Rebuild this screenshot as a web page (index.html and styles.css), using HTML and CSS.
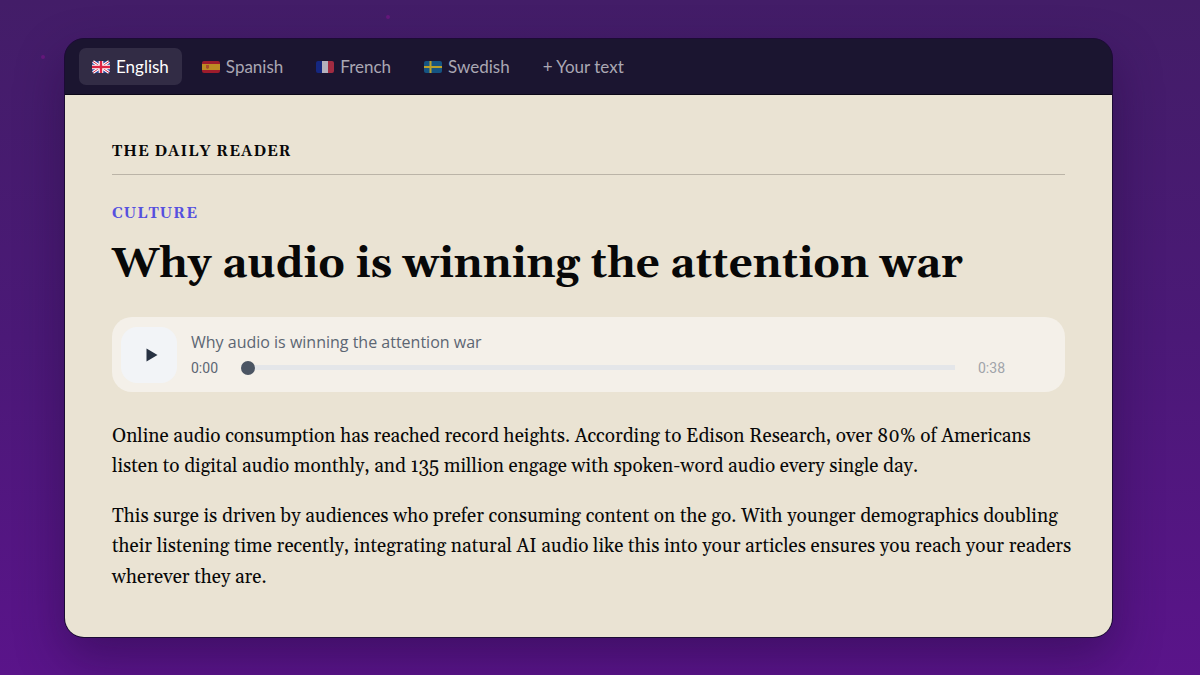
FILE: index.html
```html
<!DOCTYPE html>
<html lang="en">
<head>
<meta charset="utf-8">
<meta name="viewport" content="width=device-width, initial-scale=1">
<title>The Daily Reader</title>
<link rel="stylesheet" href="styles.css">
</head>
<body>
<span class="spark spark-top"></span>
<span class="spark spark-side"></span>
<main class="window">
  <nav class="tabs" aria-label="Language">
    <button class="tab tab-active" type="button">
      <svg class="flag" viewBox="0 0 18 14" aria-hidden="true"><rect y="1" width="18" height="12" rx="2" fill="#28469b"/><path d="M1 1.500L17 12.500M17 1.500L1 12.500" stroke="#fff" stroke-width="3"/><path d="M1 1.500L17 12.500M17 1.500L1 12.500" stroke="#d22848" stroke-width="1"/><path d="M9 1V13M0 7H18" stroke="#fff" stroke-width="4.600"/><path d="M9 1V13M0 7H18" stroke="#dc2445" stroke-width="2.400"/></svg>
      English
    </button>
    <button class="tab" type="button">
      <svg class="flag" viewBox="0 0 18 14" aria-hidden="true"><rect y="1" width="18" height="12" rx="2" fill="#9e1c2c"/><path d="M0 4H18V10H0Z" fill="#bc8b24"/><path d="M4 5H7V8L5.500 9L4 8Z" fill="#a84b2b"/></svg>
      Spanish
    </button>
    <button class="tab" type="button">
      <svg class="flag" viewBox="0 0 18 14" aria-hidden="true"><path d="M6 1H2Q0 1 0 3V11Q0 13 2 13H6Z" fill="#152780"/><path d="M6 1H12V13H6Z" fill="#b4b1bd"/><path d="M12 1H16Q18 1 18 3V11Q18 13 16 13H12Z" fill="#a22b41"/></svg>
      French
    </button>
    <button class="tab" type="button">
      <svg class="flag" viewBox="0 0 18 14" aria-hidden="true"><rect y="1" width="18" height="12" rx="2" fill="#155482"/><path d="M6.500 1V13M0 7H18" stroke="#baa02b" stroke-width="2"/></svg>
      Swedish
    </button>
    <button class="tab" type="button">+ Your text</button>
  </nav>
  <article class="article">
    <header class="masthead">THE DAILY READER</header>
    <p class="category">CULTURE</p>
    <h1 class="headline">Why audio is winning the attention war</h1>
    <section class="player" aria-label="Audio player">
      <button class="play" type="button" aria-label="Play"><svg class="play-icon" viewBox="0 0 12 14" aria-hidden="true"><path d="M0.500 0.500L11.500 7L0.500 13.500Z" fill="#273142"/></svg></button>
      <div class="track">
        <label class="track-title" for="seek">Why audio is winning the attention war</label>
        <div class="timeline">
          <span class="time">0:00</span>
          <input class="seek" id="seek" type="range" min="0" max="38" value="0">
          <span class="time time-total">0:38</span>
        </div>
      </div>
    </section>
    <p class="copy">Online audio consumption has reached record heights. According to Edison Research, over 80% of Americans listen to digital audio monthly, and 135 million engage with spoken-word audio every single day.</p>
    <p class="copy">This surge is driven by audiences who prefer consuming content on the go. With younger demographics doubling their listening time recently, integrating natural AI audio like this into your articles ensures you reach your readers wherever they are.</p>
  </article>
</main>
</body>
</html>
```
FILE: styles.css
```css
* { box-sizing: border-box; }
body {
  min-height: 100vh;
  margin: 0;
  padding: 38px 87px 37px 64px;
  display: flex;
  background: linear-gradient(#431d68, #4b1977 50%, #5a148a);
  font-family: Georgia, Gelasio, "Liberation Serif", serif;
  color: #080808;
}
.spark {
  position: absolute;
  width: 4px;
  height: 4px;
  border-radius: 50%;
  background: #64177a;
}
.spark-top { left: 386px; top: 15px; }
.spark-side { left: 41px; top: 55px; }
.window {
  flex: 1;
  display: flex;
  flex-direction: column;
  overflow: hidden;
  border: 1px solid #1c0b35;
  border-radius: 20px;
  background: #1b1530;
  box-shadow: 0 20px 48px rgba(28, 8, 52, 0.4);
}
.tabs {
  display: flex;
  gap: 7px;
  padding: 9px 14px;
  border-bottom: 1px solid #0c0718;
}
.tab {
  display: flex;
  align-items: center;
  gap: 6px;
  height: 37px;
  padding: 0 13px;
  border: 0;
  border-radius: 7px;
  background: none;
  color: #aaa7b3;
  font: 17px Lato, sans-serif;
}
.tab-active { background: #322c45; color: #fff; }
.flag { width: 18px; height: 14px; }
.article {
  flex: 1;
  padding: 46px 47px 0;
  background: #eae3d3;
}
.masthead {
  padding-bottom: 11px;
  border-bottom: 1px solid #bbb4a7;
  font-size: 15px;
  font-weight: bold;
  line-height: 22px;
  letter-spacing: 1px;
}
.category {
  margin: 28px 0 0;
  color: #5650df;
  font-size: 15px;
  font-weight: bold;
  line-height: 22px;
  letter-spacing: 1px;
}
.headline {
  margin: 12px 0 24px;
  font-size: 42px;
  line-height: 56px;
}
.player {
  display: flex;
  align-items: center;
  gap: 14px;
  height: 75px;
  margin-bottom: 29px;
  padding: 0 60px 0 9px;
  border-radius: 20px;
  background: #f4f0e9;
}
.play {
  display: grid;
  place-items: center;
  width: 56px;
  height: 56px;
  padding: 0 0 0 6px;
  border: 0;
  border-radius: 16px;
  background: #f2f4f7;
}
.play-icon { width: 12px; height: 14px; }
.track {
  flex: 1;
  color: #5c6673;
  font-family: "Open Sans", "Noto Sans", sans-serif;
}
.track-title { display: block; font-size: 16px; line-height: 26px; }
.timeline { display: flex; align-items: center; height: 26px; }
.time { font: 14px/20px Roboto, sans-serif; }
.time-total { color: #a0a4aa; }
.seek {
  flex: 1;
  min-width: 0;
  height: 14px;
  margin: 0 23px;
  appearance: none;
  background: linear-gradient(#e4e6e9, #e4e6e9) center / 100% 5px no-repeat;
}
.seek::-webkit-slider-thumb {
  appearance: none;
  width: 14px;
  height: 14px;
  border-radius: 50%;
  background: #4b5563;
}
.copy {
  margin: 0 -12px 19px 0;
  font-size: 19px;
  line-height: 1.6;
}
```
